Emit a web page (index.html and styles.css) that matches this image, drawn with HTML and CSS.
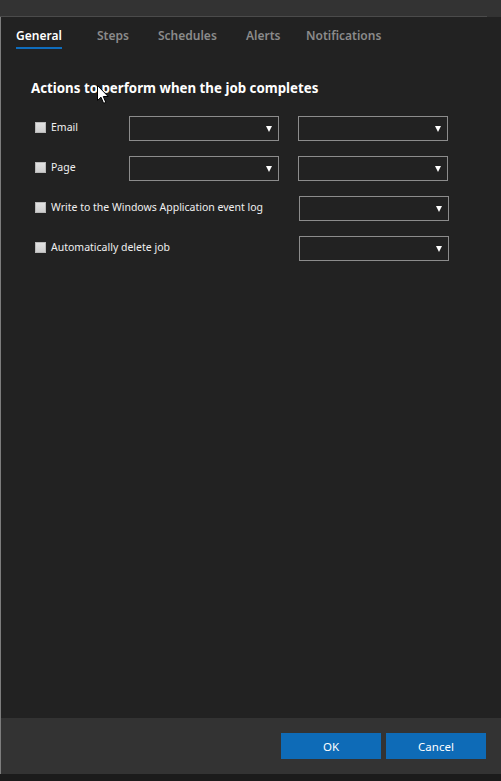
FILE: index.html
```html
<!DOCTYPE html>
<html>
<head>
<meta charset="utf-8">
<title>Job - Notifications</title>
<link rel="stylesheet" href="styles.css">
</head>
<body>
<div class="dialog">
  <div class="titlebar"><div class="titlebar-line"></div></div>
  <div class="main">
    <nav class="tabs">
      <div class="tab active"><span class="tab-label">General</span></div>
      <div class="tab"><span class="tab-label">Steps</span></div>
      <div class="tab"><span class="tab-label">Schedules</span></div>
      <div class="tab"><span class="tab-label">Alerts</span></div>
      <div class="tab"><span class="tab-label">Notifications</span></div>
    </nav>
    <section class="content">
      <h2 class="heading">Actions to perform when the job completes</h2>
      <div class="rows">
        <div class="row row-pair">
          <label class="check"><span class="box"></span><span class="check-text">Email</span></label>
          <div class="select"><span class="arrow"></span></div>
          <div class="select"><span class="arrow"></span></div>
        </div>
        <div class="row row-pair">
          <label class="check"><span class="box"></span><span class="check-text">Page</span></label>
          <div class="select"><span class="arrow"></span></div>
          <div class="select"><span class="arrow"></span></div>
        </div>
        <div class="row">
          <label class="check check-wide"><span class="box"></span><span class="check-text">Write to the Windows Application event log</span></label>
          <div class="select"><span class="arrow"></span></div>
        </div>
        <div class="row">
          <label class="check check-wide"><span class="box"></span><span class="check-text">Automatically delete job</span></label>
          <div class="select"><span class="arrow"></span></div>
        </div>
      </div>
    </section>
    <svg class="cursor" width="13" height="20" viewBox="0 0 13 20">
      <path d="M0.5 0.5 L0.5 15.5 L4 12.2 L6.6 18.3 L8.8 17.4 L6.3 11.5 L11.2 11.5 Z" fill="#ffffff" stroke="#000000" stroke-width="1" stroke-linejoin="miter"/>
    </svg>
  </div>
  <footer class="footer">
    <button class="btn">OK</button>
    <button class="btn">Cancel</button>
  </footer>
  <div class="bottom-strip"></div>
</div>
</body>
</html>
```
FILE: styles.css
```css
html, body {
  margin: 0;
  padding: 0;
  background: #222222;
}
body {
  font-family: "Noto Sans", "Open Sans", sans-serif;
  color: #ffffff;
}
.dialog {
  width: 501px;
  height: 781px;
  display: flex;
  flex-direction: column;
  background: #222222;
  overflow: hidden;
}
.titlebar {
  height: 17px;
  flex: none;
  background: #333333;
  display: flex;
  flex-direction: column;
  justify-content: flex-end;
}
.titlebar-line {
  width: 487px;
  height: 1px;
  background: #4b4b4b;
}
.main {
  flex: 1;
  position: relative;
  border-left: 1px solid #7d7d7d;
  background: #222222;
}
.tabs {
  display: grid;
  grid-template-columns: 81px 61px 88px 60px auto;
  padding: 9px 0 0 15px;
}
.tab {
  font-size: 12px;
  font-weight: 600;
  line-height: 19px;
  color: #8b8b8b;
  white-space: nowrap;
}
.tab-label {
  display: inline-block;
  padding-bottom: 2px;
  border-bottom: 2px solid transparent;
}
.tab.active {
  color: #ffffff;
}
.tab.active .tab-label {
  border-bottom-color: #0f6dbd;
}
.content {
  padding: 0 0 0 30px;
}
.heading {
  margin: 30px 0 0 0;
  font-size: 13.3px;
  font-weight: 700;
  line-height: 18px;
}
.rows {
  width: 414px;
  margin: 19px 0 0 4px;
  display: flex;
  flex-direction: column;
  gap: 15px;
}
.row {
  display: flex;
  align-items: center;
  height: 25px;
}
.row-pair {
  padding-right: 1px;
  width: 413px;
}
.check {
  display: flex;
  align-items: center;
  width: 94px;
  flex: none;
  gap: 5px;
  font-size: 10.5px;
  line-height: 14px;
  color: #f0f0f0;
  white-space: nowrap;
  margin-top: -3px;
}
.check-wide {
  width: auto;
  flex: 1;
}
.box {
  width: 9px;
  height: 9px;
  flex: none;
  border: 1px solid #b9b9b9;
  background: linear-gradient(#e2e2e2, #cfcfcf);
}
.select {
  width: 148px;
  height: 23px;
  flex: none;
  border: 1px solid #8c8c8c;
  display: flex;
  align-items: center;
  justify-content: flex-end;
  box-sizing: content-box;
}
.row-pair .select + .select {
  margin-left: 19px;
}
.arrow {
  width: 0;
  height: 0;
  margin-right: 6px;
  border-left: 3px solid transparent;
  border-right: 3px solid transparent;
  border-top: 6px solid #ffffff;
}
.cursor {
  position: absolute;
  left: 96px;
  top: 68px;
}
.footer {
  height: 56px;
  flex: none;
  background: #333333;
  border-left: 1px solid #7d7d7d;
  display: flex;
  justify-content: flex-end;
  align-items: flex-start;
  gap: 5px;
  padding: 15px 15px 0 0;
  box-sizing: border-box;
}
.btn {
  width: 100px;
  height: 26px;
  border: none;
  margin: 0;
  padding: 0;
  background: #0e6bb7;
  color: #ffffff;
  font-family: "Noto Sans", "Open Sans", sans-serif;
  font-size: 11.5px;
}
.bottom-strip {
  height: 7px;
  flex: none;
  background: #1b1b1b;
}
```
